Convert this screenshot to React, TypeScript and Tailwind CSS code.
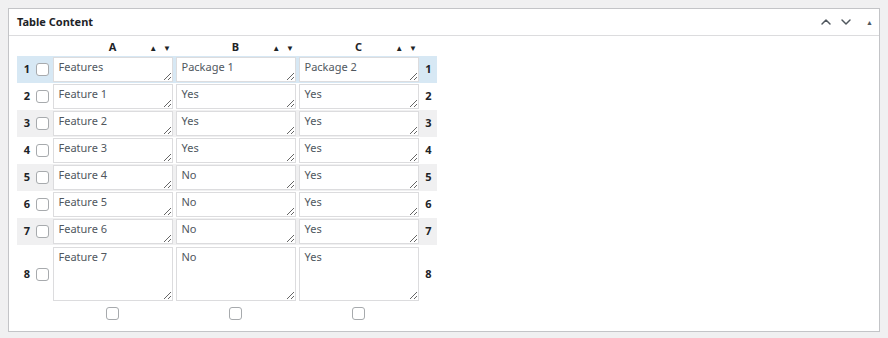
import { ChevronDown, ChevronUp } from 'lucide-react';

const rows = [
  ['Features', 'Package 1', 'Package 2'],
  ['Feature 1', 'Yes', 'Yes'],
  ['Feature 2', 'Yes', 'Yes'],
  ['Feature 3', 'Yes', 'Yes'],
  ['Feature 4', 'No', 'Yes'],
  ['Feature 5', 'No', 'Yes'],
  ['Feature 6', 'No', 'Yes'],
  ['Feature 7', 'No', 'Yes'],
];

function Box() {
  return <span className="block w-[13px] h-[13px] rounded-[3px] border border-[#a7aaad] bg-white" />;
}

function SortArrows() {
  return (
    <span className="flex items-center gap-[6px] text-[8px] text-[#1d2327] leading-none">
      <span>▲</span>
      <span>▼</span>
    </span>
  );
}

export default function App() {
  return (
    <div className="w-[888px] h-[338px] bg-[#f0f0f1] pt-2 px-2 font-['Noto_Sans',sans-serif]">
      <div className="w-[872px] h-[324px] bg-white border border-[#c3c4c7]">
        {/* header */}
        <div className="h-[27px] flex items-center justify-between pl-2 pr-[6px] border-b border-[#dcdcde]">
          <h2 className="text-[11px] font-bold text-[#1d2327]">Table Content</h2>
          <div className="flex items-center text-[#50575e]">
            <ChevronUp className="w-[16px] h-[16px]" strokeWidth={2.2} />
            <ChevronDown className="w-[16px] h-[16px] ml-[4px]" strokeWidth={2.2} />
            <span className="ml-[12px] text-[7px] leading-none">▲</span>
          </div>
        </div>

        <div className="pl-2 pt-[2px]">
          {/* column header */}
          <div className="flex h-[18px] items-center">
            <div className="w-[34px]" />
            {['A', 'B', 'C'].map((c) => (
              <div key={c} className="w-[123px] relative flex items-center justify-center">
                <span className="text-[11px] font-bold text-[#1d2327]">{c}</span>
                <span className="absolute right-[3px] top-[5px]">
                  <SortArrows />
                </span>
              </div>
            ))}
          </div>

          {rows.map((r, i) => {
            const bg = i === 0 ? 'bg-[#d7e8f4]' : i % 2 === 0 ? 'bg-[#f0f0f1]' : 'bg-transparent';
            const tall = i === 7;
            return (
              <div key={i} className={`flex items-center w-[420px] ${bg} ${tall ? 'h-[58px]' : 'h-[27px]'}`}>
                <div className="w-[13px] text-right text-[11px] font-bold text-[#1d2327]">{i + 1}</div>
                <div className="w-[21px] flex justify-end pr-[2px]">
                  <Box />
                </div>
                {r.map((v, j) => (
                  <div key={j} className="w-[123px] flex justify-center">
                    <textarea
                      readOnly
                      value={v}
                      className={`w-[120px] ${tall ? 'h-[54px]' : 'h-[25px]'} bg-white border border-[#dcdcde] px-[5px] pt-[1px] text-[11px] text-[#50575e] leading-[16px] outline-none resize overflow-hidden`}
                    />
                  </div>
                ))}
                <div className="w-[17px] text-center text-[11px] font-bold text-[#1d2327]">{i + 1}</div>
              </div>
            );
          })}

          <div className="flex h-[21px] items-center">
            <div className="w-[34px]" />
            {[0, 1, 2].map((k) => (
              <div key={k} className="w-[123px] flex justify-center">
                <Box />
              </div>
            ))}
          </div>
        </div>
      </div>
    </div>
  );
}
